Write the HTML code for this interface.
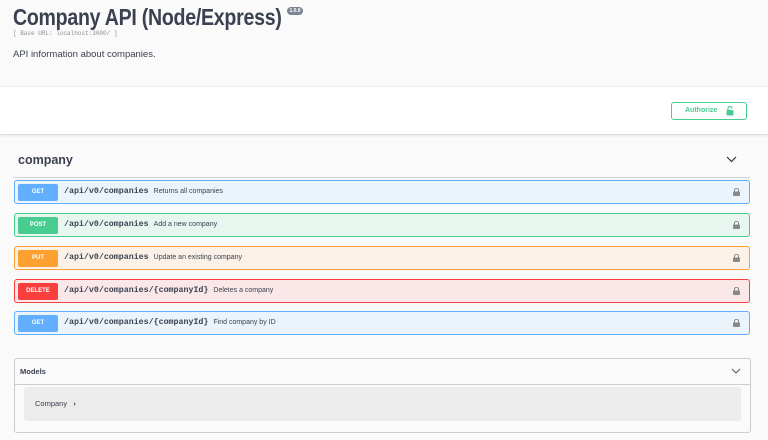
<!DOCTYPE html>
<html><head><meta charset="utf-8"><style>
*{margin:0;padding:0;box-sizing:border-box}
body{width:768px;height:440px;overflow:hidden;background:#fafafa;font-family:"Liberation Sans",sans-serif;color:#3b4151;position:relative}
.abs{position:absolute}
h1{position:absolute;left:13px;top:4px;font-size:23px;font-weight:bold;color:#3b4151;letter-spacing:-0.3px;transform:scaleX(0.85);transform-origin:0 0;white-space:nowrap}
.ver{left:287px;top:7px;width:16px;height:8px;border-radius:4px;background:#7d8492;color:#fff;font-size:5px;font-weight:bold;text-align:center;line-height:8px}
.base{left:13px;top:30px;font-family:"Liberation Mono",monospace;font-size:6px;color:#8a8f99}
.desc{left:13px;top:49px;font-size:9.5px;color:#3b4151}
.band{left:0;top:86px;width:768px;height:49px;background:#fff;border-top:1px solid #eee;border-bottom:1px solid #ddd;box-shadow:0 1px 2px rgba(0,0,0,.08)}
.auth{left:671px;top:102px;width:76px;height:18px;border:1px solid #49cc90;border-radius:3px;color:#49cc90;font-size:7px;font-weight:bold;line-height:16px;padding-left:13px;background:#fff}
.tag{left:18px;top:153px;font-size:12.5px;font-weight:bold;color:#3b4151}
.tline{left:13px;top:177px;width:737px;height:1px;background:#d0d2d6}
.op{position:absolute;left:14px;width:736px;height:24px;border:1px solid;border-radius:3px}
.m{position:absolute;left:3px;top:3px;width:40px;height:17px;border-radius:2px;color:#fff;font-size:6px;font-weight:bold;text-align:center;line-height:17px}
.p{position:absolute;left:49px;top:6px;font-family:"Liberation Mono",monospace;font-size:8.3px;font-weight:bold;color:#3b4151}
.d{font-family:"Liberation Sans",sans-serif;font-weight:normal;font-size:7px;margin-left:5px}
.lk{position:absolute;right:9px;top:7px;width:7px;height:8px}
.models{left:14px;top:358px;width:737px;height:75px;border:1px solid #ccc;border-radius:3px;background:#fafafa}
</style></head><body>
<h1>Company API (Node/Express)</h1>
<div class="abs ver">1.0.0</div>
<div class="abs base">[ Base URL: localhost:3000/ ]</div>
<div class="abs desc">API information about companies.</div>
<div class="abs band"></div>
<div class="abs auth">Authorize<svg style="position:absolute;left:54px;top:3px" width="8" height="10" viewBox="0 0 8 10"><path d="M2 4V2.5a2 2 0 0 1 4 0" fill="none" stroke="#49cc90" stroke-width="1.2"/><rect x="0.5" y="4" width="7" height="5.5" rx="1" fill="#49cc90"/></svg></div>
<div class="abs tag">company</div>
<svg class="abs" style="left:726px;top:156px" width="11" height="7" viewBox="0 0 11 7"><path d="M1 1l4.5 4.5L10 1" fill="none" stroke="#333" stroke-width="1.2"/></svg>
<div class="abs tline"></div>

<div class="op" style="top:180px;background:#ebf3fb;border-color:#61affe"><div class="m" style="background:#61affe">GET</div><div class="p">/api/v0/companies<span class="d">Returns all companies</span></div><svg class="lk" viewBox="0 0 7 8"><path d="M1.5 3.5V2.3a2 2 0 0 1 4 0V3.5" fill="none" stroke="#888" stroke-width="1"/><rect x="0" y="3.5" width="7" height="4.5" rx="1" fill="#888"/></svg></div>
<div class="op" style="top:213px;background:#e8f6f0;border-color:#49cc90"><div class="m" style="background:#49cc90">POST</div><div class="p">/api/v0/companies<span class="d">Add a new company</span></div><svg class="lk" viewBox="0 0 7 8"><path d="M1.5 3.5V2.3a2 2 0 0 1 4 0V3.5" fill="none" stroke="#888" stroke-width="1"/><rect x="0" y="3.5" width="7" height="4.5" rx="1" fill="#888"/></svg></div>
<div class="op" style="top:246px;background:#fbf1e6;border-color:#fca130"><div class="m" style="background:#fca130">PUT</div><div class="p">/api/v0/companies<span class="d">Update an existing company</span></div><svg class="lk" viewBox="0 0 7 8"><path d="M1.5 3.5V2.3a2 2 0 0 1 4 0V3.5" fill="none" stroke="#888" stroke-width="1"/><rect x="0" y="3.5" width="7" height="4.5" rx="1" fill="#888"/></svg></div>
<div class="op" style="top:279px;background:#fae7e7;border-color:#f93e3e"><div class="m" style="background:#f93e3e">DELETE</div><div class="p">/api/v0/companies/{companyId}<span class="d">Deletes a company</span></div><svg class="lk" viewBox="0 0 7 8"><path d="M1.5 3.5V2.3a2 2 0 0 1 4 0V3.5" fill="none" stroke="#888" stroke-width="1"/><rect x="0" y="3.5" width="7" height="4.5" rx="1" fill="#888"/></svg></div>
<div class="op" style="top:311px;background:#ebf3fb;border-color:#61affe"><div class="m" style="background:#61affe">GET</div><div class="p">/api/v0/companies/{companyId}<span class="d">Find company by ID</span></div><svg class="lk" viewBox="0 0 7 8"><path d="M1.5 3.5V2.3a2 2 0 0 1 4 0V3.5" fill="none" stroke="#888" stroke-width="1"/><rect x="0" y="3.5" width="7" height="4.5" rx="1" fill="#888"/></svg></div>

<div class="abs models">
 <div style="position:absolute;left:5px;top:8px;font-size:7.5px;font-weight:bold;color:#3b4151">Models</div>
 <svg style="position:absolute;left:716px;top:9px" width="10" height="6" viewBox="0 0 10 6"><path d="M1 1l4 4 4-4" fill="none" stroke="#555" stroke-width="1"/></svg>
 <div style="position:absolute;left:0;top:25px;width:735px;height:1px;background:#ccc"></div>
 <div style="position:absolute;left:9px;top:28px;width:717px;height:34px;background:#ececec;border-radius:3px">
  <div style="position:absolute;left:11px;top:12px;font-size:7.5px;color:#3b4151">Company &nbsp;&nbsp;<b>›</b></div>
 </div>
</div>
</body></html>
